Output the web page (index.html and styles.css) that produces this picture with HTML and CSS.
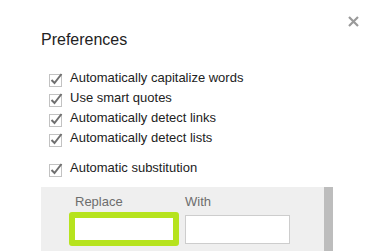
FILE: index.html
```html
<!DOCTYPE html>
<html lang="en">
<head>
  <meta charset="UTF-8">
  <title>Preferences</title>
  <link rel="stylesheet" href="styles.css">
</head>
<body>
  <div class="dialog">
    <span class="close" title="Close">
      <svg width="11" height="11" viewBox="0 0 11 11"><path d="M1 1L10 10M10 1L1 10" stroke="#9a9a9a" stroke-width="2.2" fill="none"/></svg>
    </span>
    <h1 class="title">Preferences</h1>

    <ul class="options">
      <li><svg class="cb" width="13" height="13" viewBox="0 0 13 13"><rect x=".5" y=".5" width="12" height="12" fill="#fff" stroke="#c2c2c2"/><path d="M2.5 6l3 3L12.5 0" fill="none" stroke="#6f6f6f" stroke-width="2"/></svg>Automatically capitalize words</li>
      <li><svg class="cb" width="13" height="13" viewBox="0 0 13 13"><rect x=".5" y=".5" width="12" height="12" fill="#fff" stroke="#c2c2c2"/><path d="M2.5 6l3 3L12.5 0" fill="none" stroke="#6f6f6f" stroke-width="2"/></svg>Use smart quotes</li>
      <li><svg class="cb" width="13" height="13" viewBox="0 0 13 13"><rect x=".5" y=".5" width="12" height="12" fill="#fff" stroke="#c2c2c2"/><path d="M2.5 6l3 3L12.5 0" fill="none" stroke="#6f6f6f" stroke-width="2"/></svg>Automatically detect links</li>
      <li><svg class="cb" width="13" height="13" viewBox="0 0 13 13"><rect x=".5" y=".5" width="12" height="12" fill="#fff" stroke="#c2c2c2"/><path d="M2.5 6l3 3L12.5 0" fill="none" stroke="#6f6f6f" stroke-width="2"/></svg>Automatically detect lists</li>
    </ul>

    <ul class="options subst">
      <li><svg class="cb" width="13" height="13" viewBox="0 0 13 13"><rect x=".5" y=".5" width="12" height="12" fill="#fff" stroke="#c2c2c2"/><path d="M2.5 6l3 3L12.5 0" fill="none" stroke="#6f6f6f" stroke-width="2"/></svg>Automatic substitution</li>
    </ul>

    <div class="panel">
      <div class="fields">
        <div class="field replace">
          <label for="replace">Replace</label>
          <input type="text" id="replace">
        </div>
        <div class="field with">
          <label for="with">With</label>
          <input type="text" id="with">
        </div>
      </div>
      <div class="scrollbar"></div>
    </div>
  </div>
</body>
</html>
```

FILE: styles.css
```css
*{
  margin:0;
  padding:0;
  box-sizing:border-box;
}
body{
  font-family:"Liberation Sans", Arial, sans-serif;
  color:#222;
  background:#fff;
  overflow:hidden;
}
.dialog{
  position:relative;
  padding:30px 0 0 41px;
  height:251px;
}
.close{
  position:absolute;
  left:348px;
  top:16px;
  width:11px;
  height:11px;
  display:block;
}
.close svg{
  display:block;
}
.title{
  font-size:16px;
  font-weight:normal;
  line-height:20px;
  margin-bottom:18px;
}
.options{
  list-style:none;
  padding-left:8px;
}
.options li{
  display:flex;
  align-items:flex-start;
  font-size:13px;
  line-height:20px;
  height:20px;
}
.cb{
  flex:none;
  margin:6px 8px 0 0;
  overflow:visible;
}
.subst{
  margin-top:10px;
}
.panel{
  margin-top:9px;
  width:292px;
  height:64px;
  background:#efefef;
  display:flex;
}
.fields{
  flex:1;
  display:flex;
  gap:6px;
  padding:5px 0 0 28px;
}
.field{
  display:flex;
  flex-direction:column;
}
.field label{
  font-size:13px;
  line-height:20px;
  color:#6d6d6d;
}
.replace label{
  padding-left:6px;
}
.field input{
  display:block;
  background:#fff;
  outline:none;
  font:inherit;
}
.replace input{
  width:110px;
  height:34px;
  border:6px solid #b6e31e;
  border-radius:3px;
}
.with input{
  margin-top:3px;
  width:105px;
  height:29px;
  border:1px solid #cdcdcd;
}
.scrollbar{
  flex:none;
  width:9px;
  background:#bdbdbd;
}
```
